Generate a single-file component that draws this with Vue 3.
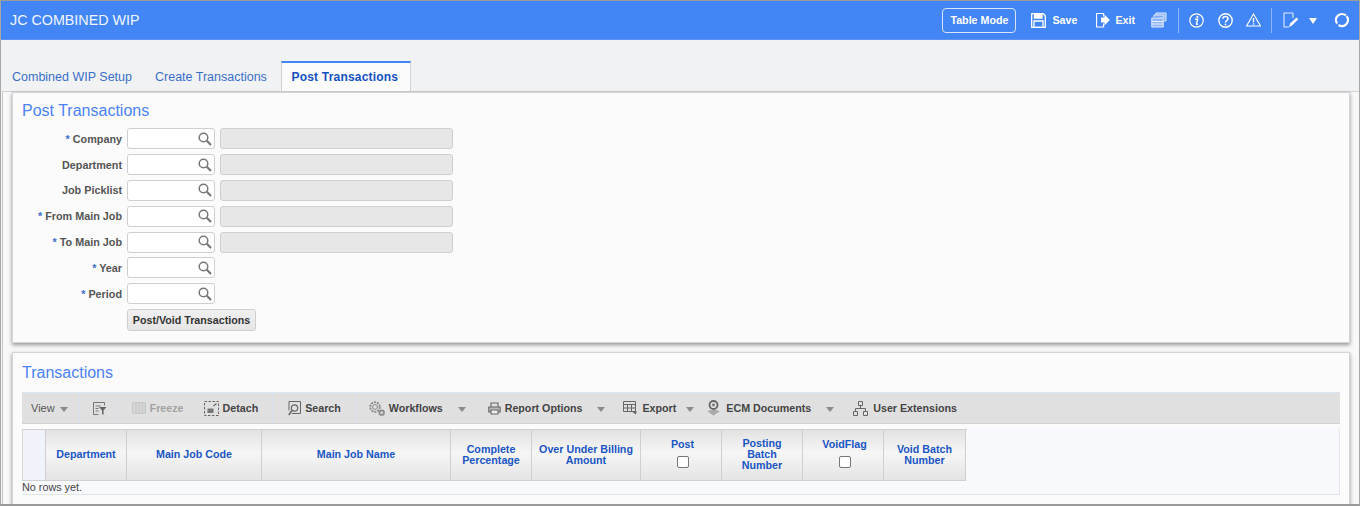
<script setup>
const rows = [
  { label: 'Company', req: true, desc: true },
  { label: 'Department', req: false, desc: true },
  { label: 'Job Picklist', req: false, desc: true },
  { label: 'From Main Job', req: true, desc: true },
  { label: 'To Main Job', req: true, desc: true },
  { label: 'Year', req: true, desc: false },
  { label: 'Period', req: true, desc: false }
]
const columns = [
  { key: 'dept', lines: ['Department'], w: 'c81' },
  { key: 'code', lines: ['Main Job Code'], w: 'c135' },
  { key: 'name', lines: ['Main Job Name'], w: 'c189' },
  { key: 'pct', lines: ['Complete', 'Percentage'], w: 'c81' },
  { key: 'over', lines: ['Over Under Billing', 'Amount'], w: 'c109' },
  { key: 'post', lines: ['Post'], w: 'c81', check: true },
  { key: 'batch', lines: ['Posting', 'Batch', 'Number'], w: 'c81' },
  { key: 'void', lines: ['VoidFlag'], w: 'c81', check: true },
  { key: 'vbn', lines: ['Void Batch', 'Number'], w: 'c82' }
]
</script>

<template>
  <div class="page">
    <header class="topbar">
      <div class="title">JC COMBINED WIP</div>
      <div class="actions">
        <button class="mode">Table Mode</button>
        <svg class="ic save" width="15" height="15" viewBox="0 0 15 15" fill="none" stroke="#fff" stroke-width="1.300"><path d="M.7.7h11.600l2 2v11.600H.7z"/><path d="M3.500.7v4.300h7.500V.7" fill="#fff"/><path d="M3 8h9v6.300H3z"/></svg>
        <span class="act a-save">Save</span>
        <svg class="ic exit" width="14" height="16" viewBox="0 0 14 16" fill="none" stroke="#fff" stroke-width="1.100"><path d="M6 1.500H.6v13.500h7V11.500M6 1.500h1.600V4.500"/><path d="M5 5.500h3.500V2.500L13.800 8l-5.300 5.500v-3H5z" fill="#fff" stroke="none"/></svg>
        <span class="act a-exit">Exit</span>
        <svg class="ic copies" width="16" height="16" viewBox="0 0 16 16" fill="none" stroke="#e4edfe" stroke-width="1"><path d="M5 3V1h10v8h-2" fill="#7fa9f6"/><path d="M3 5V3h10v3" fill="#7fa9f6"/><path d="M.8 6h11.400v9H.8z" fill="#8fb4f8"/><path d="M.8 9.500h11.400M.8 12h11.400"/></svg>
        <i class="vsep s1"></i>
        <svg class="ic info" width="15" height="15" viewBox="0 0 15 15" fill="none"><circle cx="7.500" cy="7.500" r="6.700" stroke="#fff" stroke-width="1.200"/><circle cx="8.400" cy="3.900" r="1.100" fill="#fff"/><path d="M6 6.300h2.600L7.500 11c0 .5.400.6 1.500.2" stroke="#fff" stroke-width="1.400" fill="none"/></svg>
        <svg class="ic help" width="15" height="15" viewBox="0 0 15 15" fill="none"><circle cx="7.500" cy="7.500" r="6.700" stroke="#fff" stroke-width="1.400"/><path d="M5 5.800c0-3 5-3 5 0 0 2-2.500 1.800-2.500 3.700" stroke="#fff" stroke-width="1.600"/><circle cx="7.500" cy="11.500" r="1" fill="#fff"/></svg>
        <svg class="ic warn" width="15" height="14" viewBox="0 0 15 14" fill="none"><path d="M7.500 1 14.500 13H.5z" stroke="#fff" stroke-width="1.100"/><path d="M7.500 5v4.500" stroke="#fff" stroke-width="1.400"/><circle cx="7.500" cy="11" r=".8" fill="#fff"/></svg>
        <i class="vsep s2"></i>
        <svg class="ic edit" width="16" height="16" viewBox="0 0 16 16" fill="none" stroke="#dfe9fd" stroke-width="1.100"><path d="M10 1H1v14h5"/><path d="M10 1v5"/><path d="M6 15l1.200-3.500L13.500 5.500l1.800 1.800L9 13.500z" fill="#fff" stroke="none"/></svg>
        <span class="caret-w"></span>
        <svg class="ic refresh" width="16" height="16" viewBox="0 0 16 16" fill="none"><circle cx="8" cy="8" r="6" stroke="#fff" stroke-width="2.200" stroke-dasharray="16.850 2" transform="rotate(-40 8 8)"/></svg>
      </div>
    </header>

    <main class="body">
      <nav class="tabs">
        <a class="tab t1">Combined WIP Setup</a>
        <a class="tab t2">Create Transactions</a>
        <a class="tab active">Post Transactions</a>
      </nav>

      <div class="content">
        <section class="panel form-panel">
          <h2>Post Transactions</h2>
          <div class="form">
            <div v-for="r in rows" :key="r.label" class="row">
              <label><span v-if="r.req" class="req">* </span>{{ r.label }}</label>
              <div class="lookup">
                <svg width="14" height="14" viewBox="0 0 14 14" fill="none"><circle cx="5.500" cy="5.500" r="4.300" stroke="#777" stroke-width="1.500"/><path d="M8.800 8.800l4.200 4.200" stroke="#777" stroke-width="2.200"/></svg>
              </div>
              <div v-if="r.desc" class="desc"></div>
            </div>
            <button class="post-btn">Post/Void Transactions</button>
          </div>
        </section>

        <section class="panel grid-panel">
          <h2>Transactions</h2>
          <div class="toolbar">
            <span class="ti muted">View</span><i class="arrow m-5"></i>
            <i class="tsep sp-a"></i>
            <svg class="tic m-filter" width="15" height="15" viewBox="0 0 15 15" fill="none" stroke="#777"><path d="M1.500 1.500h11v3M1.500 1.500v12h5M3.500 5h5M3.500 7.500h3M3.500 10h3"/><path d="M7 6h7.500l-3 3.500V14l-1.500-1V9.500z" fill="#666" stroke="none"/></svg>
            <i class="tsep sp-b"></i>
            <svg class="tic m-freeze" width="14" height="14" viewBox="0 0 14 14" fill="none" stroke="#c6c6c6"><path d="M.5 1.500h13v11H.5z" fill="#d6d6d6"/><path d="M4 1.500v11M7 1.500v11M10 1.500v11"/></svg>
            <span class="ti disabled m-4">Freeze</span>
            <svg class="tic m-detach" width="15" height="15" viewBox="0 0 15 15" fill="none" stroke="#666"><path d="M.5.500h14v14H.5z" stroke-dasharray="2.500 1.500"/><path d="M3.500 7.500h6v4.500h-6z" fill="#777" stroke="none"/><path d="M9.500 5l3-2.500" stroke-width="1.200"/></svg>
            <span class="ti m-4">Detach</span>
            <i class="tsep sp-c"></i>
            <svg class="tic m-search" width="13" height="15" viewBox="0 0 13 15" fill="none" stroke="#666"><path d="M1 .5h11.500v12H4"/><path d="M1 .5v9"/><circle cx="6.500" cy="7" r="3.200" stroke-width="1.200"/><path d="M4 9.500L.8 14" stroke-width="1.600"/></svg>
            <span class="ti m-4">Search</span>
            <i class="tsep sp-d"></i>
            <svg class="tic m-wf" width="16" height="15" viewBox="0 0 16 15" fill="none" stroke="#888"><circle cx="6" cy="6" r="4.800" stroke-width="1.800" stroke-dasharray="2 1"/><circle cx="6" cy="6" r="2.400"/><circle cx="12.700" cy="11.700" r="2.400" stroke-width="1.500" fill="#ccc"/></svg>
            <span class="ti m-4">Workflows</span><i class="arrow a-wf"></i>
            <svg class="tic m-rep" width="13" height="13" viewBox="0 0 13 13" fill="none" stroke="#666" stroke-width="1.100"><path d="M3 5V1h7v4"/><path d="M.8 5h11.400v5H.8z" fill="#bbb"/><path d="M3 8h7v4H3z" fill="#eee"/></svg>
            <span class="ti m-4">Report Options</span><i class="arrow a-rep"></i>
            <svg class="tic m-exp" width="15" height="14" viewBox="0 0 15 14" fill="none" stroke="#666"><path d="M.5.500h12v10h-12zM.5 3.500h12M4.500 3.500v7M8.500 3.500v7M.5 7h12"/><path d="M9 10.500h5l-1.500 3z" fill="#666" stroke="none"/></svg>
            <span class="ti m-4">Export</span><i class="arrow a-exp"></i>
            <svg class="tic m-ecm" width="15" height="16" viewBox="0 0 15 16" fill="none" stroke="#666"><circle cx="7.500" cy="5" r="4" stroke-width="1.800"/><circle cx="7.500" cy="5" r="1.400" fill="#777" stroke="none"/><path d="M7.500 9v4" stroke-width="1.500"/><path d="M1.500 11.500l6 4 6-4-2.500-1.500H4z" fill="#aaa" stroke="none"/></svg>
            <span class="ti m-5">ECM Documents</span><i class="arrow a-ecm"></i>
            <svg class="tic m-user" width="15" height="15" viewBox="0 0 15 15" fill="none" stroke="#666"><path d="M5.500.5h4v4h-4zM.5 10.500h4v4h-4zM10.500 10.500h4v4h-4z"/><path d="M7.500 4.500v3M2.500 10.500v-3h10v3"/></svg>
            <span class="ti m-5">User Extensions</span>
          </div>

          <div class="grid">
            <div class="thead">
              <div class="th sel"></div>
              <div v-for="c in columns" :key="c.key" class="th" :class="[c.w, { 'has-chk': c.check }]">
                <span v-for="l in c.lines" :key="l" class="ln">{{ l }}</span>
                <input v-if="c.check" type="checkbox" class="chk" />
              </div>
            </div>
            <div class="empty">No rows yet.</div>
          </div>
        </section>
      </div>
    </main>
  </div>
</template>

<style>
html, body { margin: 0; background: #f1f2f4; }
</style>

<style scoped>
.page {
  width: 1360px;
  height: 506px;
  overflow: hidden;
  box-sizing: border-box;
  border-top: 1px solid #9b9b9b;
  border-left: 1px solid #a8a8a8;
  border-right: 1px solid #a8a8a8;
  border-bottom: 2px solid #9a9a9a;
  background: #f1f2f4;
  font-family: "Liberation Sans", Arial, sans-serif;
}
.topbar {
  height: 38px;
  background: #4285f4;
  border-bottom: 1px solid #5d93ee;
  display: flex;
  align-items: center;
  justify-content: space-between;
  padding: 0 9px;
  color: #fff;
}
.title { font-size: 14.300px; color: #f1f6ff; }
.actions { display: flex; align-items: center; }
.mode {
  width: 74px;
  height: 25px;
  box-sizing: border-box;
  padding: 0;
  border: 1px solid #d7e4fc;
  border-radius: 4px;
  background: transparent;
  color: #fff;
  font: bold 10.700px "Liberation Sans", Arial, sans-serif;
}
.act { font-size: 10.700px; font-weight: bold; color: #fff; }
.ic { display: block; flex: none; }
.save { margin-left: 15px; }
.a-save { margin-left: 6px; }
.exit { margin-left: 19px; }
.a-exit { margin-left: 5px; }
.copies { margin-left: 16px; }
.vsep { width: 1px; height: 25px; background: #8fb6f8; flex: none; }
.s1 { margin-left: 11px; }
.info { margin-left: 10px; }
.help { margin-left: 14px; }
.warn { margin-left: 13px; }
.s2 { margin-left: 10px; }
.edit { margin-left: 11px; }
.caret-w {
  margin-left: 10px;
  border-left: 4.500px solid transparent;
  border-right: 4.500px solid transparent;
  border-top: 6px solid #fff;
  margin-top: 2px;
}
.refresh { margin-left: 17px; }

.body { padding-top: 21px; }
.tabs { display: flex; height: 30px; align-items: stretch; padding-left: 11px; }
.tab {
  font-size: 12.500px;
  color: #3a6fc9;
  display: flex;
  align-items: center;
  padding-top: 1px;
  box-sizing: border-box;
}
.t2 { margin-left: 23px; }
.active {
  margin-left: 14px;
  width: 130px;
  justify-content: center;
  padding-top: 0;
  padding-right: 2px;
  background: #fbfbfb;
  border-top: 2px solid #4285f4;
  border-left: 1px solid #cfd2d6;
  border-right: 1px solid #cfd2d6;
  color: #1450c0;
  font-weight: bold;
  font-size: 12px;
  letter-spacing: .2px;
}
.content {
  margin-left: 1px;
  height: 415px;
  box-sizing: border-box;
  background: #f8f8f8;
  border-top: 1px solid #cfd2d6;
  border-left: 1px solid #c8c8c8;
}
.panel {
  margin: 0 9px 0 9px;
  background: #fbfbfb;
  border: 1px solid #d4d4d4;
  box-shadow: 0 2px 4px rgba(0, 0, 0, .4);
  box-sizing: border-box;
  padding: 0 9px;
}
h2 {
  margin: 0;
  font-size: 16px;
  font-weight: normal;
  color: #4b82f5;
  line-height: 20px;
}
.form-panel { height: 251px; padding-top: 8px; }
.form {
  padding-top: 7.200px;
  display: flex;
  flex-direction: column;
  gap: 4.850px;
}
.row { display: flex; align-items: center; height: 21px; }
label {
  width: 100px;
  flex: none;
  text-align: right;
  font-size: 10.800px;
  font-weight: bold;
  color: #555;
}
.req { color: #3a6fc9; }
.lookup {
  margin-left: 5px;
  width: 88px;
  height: 21px;
  box-sizing: border-box;
  background: #fff;
  border: 1px solid #cfcfcf;
  border-radius: 3px;
  display: flex;
  align-items: center;
  justify-content: flex-end;
  padding-right: 2px;
}
.desc {
  margin-left: 5px;
  width: 233px;
  height: 21px;
  box-sizing: border-box;
  background: #e7e7e7;
  border: 1px solid #cfcfcf;
  border-radius: 3px;
}
.post-btn {
  margin-left: 105px;
  width: 129px;
  height: 22px;
  padding: 0;
  box-sizing: border-box;
  border: 1px solid #cfcfcf;
  border-radius: 3px;
  background: linear-gradient(#f0f0f0, #e6e6e6);
  color: #333;
  font: bold 10.700px "Liberation Sans", Arial, sans-serif;
}
.grid-panel { margin-top: 9px; height: 170px; padding-top: 10px; }
.toolbar {
  margin-top: 9px;
  height: 32px;
  background: #e0e0e0;
  border-top: 1px solid #dbe6f5;
  border-bottom: 1px solid #d2d2d2;
  box-sizing: border-box;
  display: flex;
  align-items: center;
  padding-left: 9px;
}
.ti { font-size: 10.700px; font-weight: bold; color: #444; white-space: nowrap; }
.muted { font-weight: normal; font-size: 11px; color: #555; }
.disabled { color: #a3a3a3; }
.tic { display: block; flex: none; }
.arrow {
  flex: none;
  border-left: 4.500px solid transparent;
  border-right: 4.500px solid transparent;
  border-top: 5px solid #8a8a8a;
  margin-top: 2px;
}
.tsep { flex: none; width: 1px; height: 30px; background: #d6dfea; }
.m-4 { margin-left: 4px; }
.m-5 { margin-left: 5px; }
.sp-a { margin-left: 11px; }
.m-filter { margin-left: 12px; }
.sp-b { margin-left: 10px; }
.m-freeze { margin-left: 14px; }
.m-detach { margin-left: 20px; }
.sp-c { margin-left: 14px; }
.m-search { margin-left: 15px; }
.sp-d { margin-left: 15px; }
.m-wf { margin-left: 12px; }
.a-wf { margin-left: 15px; }
.m-rep { margin-left: 22px; }
.a-rep { margin-left: 15px; }
.m-exp { margin-left: 18px; }
.a-exp { margin-left: 10px; }
.m-ecm { margin-left: 12px; }
.a-ecm { margin-left: 15px; }
.m-user { margin-left: 19px; }

.grid {
  margin-top: 5px;
  height: 66px;
  background: #f8f9fd;
  border-bottom: 1px solid #dfe3ea;
  border-right: 1px solid #e3e6ec;
  box-sizing: border-box;
}
.thead { display: flex; height: 52px; border-top: 1px solid #d0d0d0; box-sizing: border-box; width: 945px; }
.th {
  box-sizing: border-box;
  flex: none;
  display: flex;
  flex-direction: column;
  align-items: center;
  justify-content: center;
  padding-bottom: 1px;
  background: linear-gradient(#e2e2e2 0%, #f6f6f6 45%, #e4e4e4 100%);
  border-right: 1px solid #cfcfcf;
  border-bottom: 1px solid #cfcfcf;
  color: #1a56c4;
  font-size: 10.700px;
  font-weight: bold;
  line-height: 11px;
  text-align: center;
}
.th.sel { width: 24px; background: #f0f3f9; border-left: 1px solid #d8d8d8; }
.th.has-chk { padding-left: 3px; padding-bottom: 4px; }
.ln { display: block; white-space: nowrap; }
.c81 { width: 81px; }
.c82 { width: 82px; }
.c109 { width: 109px; }
.c135 { width: 135px; }
.c189 { width: 189px; }
.chk {
  appearance: none;
  margin: 6px 0 0;
  width: 12px;
  height: 12px;
  background: #fff;
  border: 1px solid #767676;
  border-radius: 2px;
  box-sizing: border-box;
}
.empty { font-size: 10.800px; color: #444; line-height: 13px; }
</style>
